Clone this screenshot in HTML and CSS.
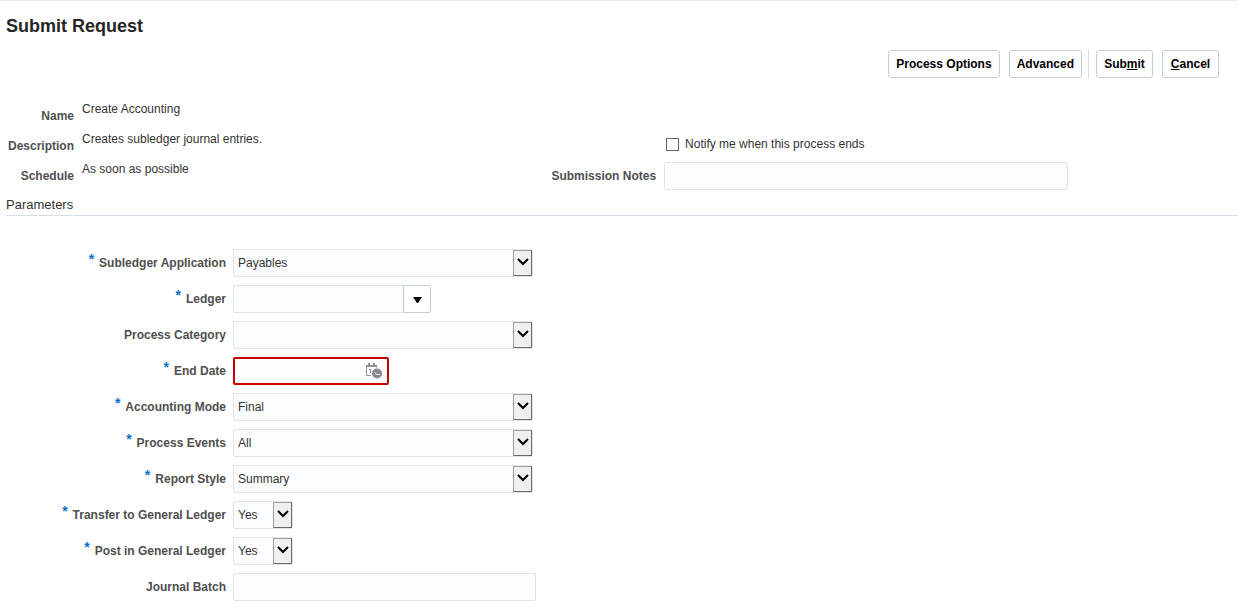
FILE: index.html
```html
<!DOCTYPE html>
<html lang="en">
<head>
  <meta charset="UTF-8">
  <title>Submit Request</title>
  <link rel="stylesheet" href="styles.css">
</head>
<body>

<form class="request">
  <h1>Submit Request</h1>

  <div class="toolbar">
    <button type="button" class="btn">Process Options</button>
    <button type="button" class="btn">Advanced</button>
    <span class="divider"></span>
    <button type="submit" class="btn" accesskey="m">Sub<u>m</u>it</button>
    <button type="button" class="btn" accesskey="c"><u>C</u>ancel</button>
  </div>

  <div class="summary">
    <dl class="details">
      <dt>Name</dt>
      <dd>Create Accounting</dd>
      <dt>Description</dt>
      <dd>Creates subledger journal entries.</dd>
      <dt>Schedule</dt>
      <dd>As soon as possible</dd>
    </dl>
    <div class="notify">
      <label class="check"><input type="checkbox" name="notify"> Notify me when this process ends</label>
      <label class="notes-label" for="notes">Submission Notes</label>
      <input type="text" class="field notes" id="notes">
    </div>
  </div>

  <h2>Parameters</h2>

  <div class="params">
    <label class="required" for="application">Subledger Application</label>
    <div class="select">
      <select class="field wide" id="application"><option>Payables</option></select>
      <span class="arrow"><svg width="12" height="8" viewBox="0 0 12 8"><path d="M1 1l5 5 5-5"/></svg></span>
    </div>

    <label class="required" for="ledger">Ledger</label>
    <div class="combo">
      <input type="text" class="field" id="ledger">
      <button type="button" aria-label="Search ledger"><svg width="9" height="6" viewBox="0 0 9 6"><path d="M0 0h9L5 6H4z"/></svg></button>
    </div>

    <label for="category">Process Category</label>
    <div class="select">
      <select class="field wide" id="category"><option></option></select>
      <span class="arrow"><svg width="12" height="8" viewBox="0 0 12 8"><path d="M1 1l5 5 5-5"/></svg></span>
    </div>

    <label class="required" for="enddate">End Date</label>
    <div class="date">
      <input type="text" id="enddate">
      <button type="button" aria-label="Select date">
        <svg width="16" height="16" viewBox="0 0 16 16">
          <path d="M5 12.500H.5v-10h10V5" fill="none" stroke="#8c9195"/>
          <path d="M0 2h11v2H0zM2 0h2v3H2zM7 0h2v3H7z" fill="#8c9195"/>
          <path d="M3 6.500h1.500v4" fill="none" stroke="#8c9195"/>
          <circle cx="11" cy="10.500" r="6" fill="#fcfdfe"/>
          <circle cx="11" cy="10.500" r="5" fill="#84898d"/>
          <path d="M8.500 9.500l2.500 2h2.500" fill="none" stroke="#fff"/>
        </svg>
      </button>
    </div>

    <label class="required" for="mode">Accounting Mode</label>
    <div class="select">
      <select class="field wide" id="mode"><option>Final</option></select>
      <span class="arrow"><svg width="12" height="8" viewBox="0 0 12 8"><path d="M1 1l5 5 5-5"/></svg></span>
    </div>

    <label class="required" for="events">Process Events</label>
    <div class="select">
      <select class="field wide" id="events"><option>All</option></select>
      <span class="arrow"><svg width="12" height="8" viewBox="0 0 12 8"><path d="M1 1l5 5 5-5"/></svg></span>
    </div>

    <label class="required" for="style">Report Style</label>
    <div class="select">
      <select class="field wide" id="style"><option>Summary</option></select>
      <span class="arrow"><svg width="12" height="8" viewBox="0 0 12 8"><path d="M1 1l5 5 5-5"/></svg></span>
    </div>

    <label class="required" for="transfer">Transfer to General Ledger</label>
    <div class="select">
      <select class="field short" id="transfer"><option>Yes</option><option>No</option></select>
      <span class="arrow"><svg width="12" height="8" viewBox="0 0 12 8"><path d="M1 1l5 5 5-5"/></svg></span>
    </div>

    <label class="required" for="post">Post in General Ledger</label>
    <div class="select">
      <select class="field short" id="post"><option>Yes</option><option>No</option></select>
      <span class="arrow"><svg width="12" height="8" viewBox="0 0 12 8"><path d="M1 1l5 5 5-5"/></svg></span>
    </div>

    <label for="batch">Journal Batch</label>
    <input type="text" class="field batch" id="batch">
  </div>
</form>

</body>
</html>
```
FILE: styles.css
```css
* {
  box-sizing: border-box;
}
body {
  margin: 0;
  border-top: 1px solid #ebebeb;
  background: #fff;
  color: #333;
  font: 12px/16px "Liberation Sans", Arial, sans-serif;
}
input, select, button {
  font: inherit;
  color: inherit;
  margin: 0;
}
.request {
  padding: 13px 0 8px 6px;
}
h1 {
  margin: 0;
  font-size: 18px;
  line-height: 24px;
  color: #262626;
}
.toolbar {
  display: flex;
  justify-content: flex-end;
  gap: 9px;
  margin-top: 12px;
  padding-right: 19px;
}
.btn {
  min-width: 57px;
  height: 28px;
  padding: 0 7px;
  border: 1px solid #c4ced7;
  border-radius: 3px;
  background: #fff;
  color: #000;
  font-weight: bold;
}
.divider {
  width: 1px;
  margin: 0 -2px 0 -3px;
  background: #d6dfe6;
}
.summary {
  display: grid;
  grid-template-columns: 44% 1fr;
  margin-top: 23px;
}
.details {
  display: grid;
  grid-template-columns: 68px 1fr;
  grid-auto-rows: 30px;
  column-gap: 8px;
  margin: 0;
}
.details dt {
  padding-top: 7px;
  text-align: right;
}
.details dd {
  margin: 0;
}
dt, .notes-label, .params label {
  font-weight: bold;
  color: #4f4f4f;
}
.notify {
  display: grid;
  grid-template-columns: 108px 404px;
  column-gap: 8px;
  row-gap: 10px;
  align-content: end;
  align-items: center;
  padding-bottom: 1px;
}
.check {
  grid-column: 2;
  display: flex;
  align-items: center;
  gap: 6px;
  padding-left: 2px;
}
.check input {
  appearance: none;
  width: 13px;
  height: 13px;
  border: 1px solid #666;
}
.check input:checked {
  background: #666;
}
.notes-label {
  text-align: right;
}
.field {
  height: 28px;
  padding: 0 4px;
  border: 1px solid #dfe4e7;
  border-radius: 2px;
  background: #fcfdfe;
}
h2 {
  margin: 6px 0 0;
  padding-bottom: 2px;
  border-bottom: 1px solid #d6dfe6;
  font-size: 13px;
  font-weight: normal;
  line-height: 16px;
}
.params {
  display: grid;
  grid-template-columns: 220px 1fr;
  grid-auto-rows: 28px;
  gap: 8px 7px;
  align-items: center;
  justify-items: start;
  margin-top: 33px;
}
.params label {
  justify-self: end;
}
.required::before {
  content: "*";
  margin-right: 5px;
  color: #0572ce;
  font-size: 14px;
  line-height: 8px;
  vertical-align: 3px;
}
.select {
  position: relative;
}
.select select {
  display: block;
  appearance: none;
}
.wide {
  width: 300px;
}
.short {
  width: 60px;
}
.arrow {
  position: absolute;
  top: 1px;
  right: 1px;
  bottom: 1px;
  display: flex;
  justify-content: center;
  width: 19px;
  padding-top: 7px;
  border: 1px solid #a0a0a0;
  border-right-color: #696969;
  border-bottom-color: #696969;
  background: #f0f0f0;
  pointer-events: none;
}
.arrow path {
  fill: none;
  stroke: #000;
  stroke-width: 2;
}
.combo {
  display: flex;
}
.combo .field {
  width: 170px;
  border-right: 0;
  border-radius: 2px 0 0 2px;
}
.combo button {
  width: 28px;
  height: 28px;
  padding: 0;
  border: 1px solid #c4ced7;
  border-radius: 0 2px 2px 0;
  background: #fff;
}
.date {
  display: flex;
  width: 156px;
  height: 28px;
  border: 2px solid #c80000;
  border-radius: 2px;
  background: #fcfdfe;
}
.date input {
  flex: 1;
  min-width: 0;
  padding: 0 4px;
  border: 0;
  background: none;
}
.date button {
  padding: 0 5px;
  border: 0;
  background: none;
}
.date svg {
  display: block;
}
.batch {
  width: 303px;
}
```
